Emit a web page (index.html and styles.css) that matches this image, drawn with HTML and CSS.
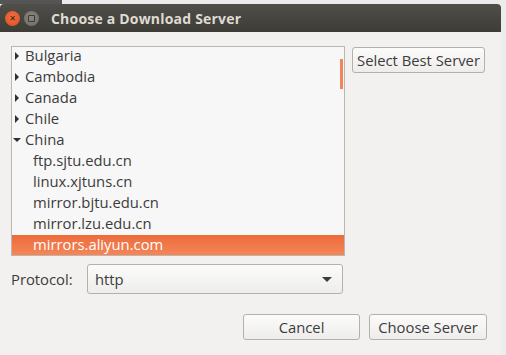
FILE: index.html
```html
<!DOCTYPE html>
<html lang="en">
<head>
  <meta charset="UTF-8">
  <title>Choose a Download Server</title>
  <link rel="stylesheet" href="styles.css">
</head>
<body>

<div class="backdrop"></div>

<div class="window">
  <div class="titlebar">
    <span class="btn-close">&#x2715;</span>
    <span class="btn-max"></span>
    <span class="title">Choose a Download Server</span>
  </div>

  <div class="content">
    <div class="top-row">
      <div class="tree">
        <div class="row"><span class="arrow right"></span>Bulgaria</div>
        <div class="row"><span class="arrow right"></span>Cambodia</div>
        <div class="row"><span class="arrow right"></span>Canada</div>
        <div class="row"><span class="arrow right"></span>Chile</div>
        <div class="row"><span class="arrow down"></span>China</div>
        <div class="row child">ftp.sjtu.edu.cn</div>
        <div class="row child">linux.xjtuns.cn</div>
        <div class="row child">mirror.bjtu.edu.cn</div>
        <div class="row child">mirror.lzu.edu.cn</div>
        <div class="row child selected">mirrors.aliyun.com</div>
        <span class="scroll"></span>
      </div>
      <button class="button best">Select Best Server</button>
    </div>

    <div class="protocol-row">
      <label>Protocol:</label>
      <div class="combo">
        <span>http</span>
        <span class="combo-arrow"></span>
      </div>
    </div>

    <div class="actions">
      <button class="button cancel">Cancel</button>
      <button class="button choose">Choose Server</button>
    </div>
  </div>
</div>

</body>
</html>
```

FILE: styles.css
```css
body {
  margin: 0;
  width: 506px;
  height: 355px;
  overflow: hidden;
  background-color: #ececec;
  font-family: "Open Sans", "DejaVu Sans", sans-serif;
  font-size: 14.8px;
  color: #3c3c3c;
  position: relative;
}
.backdrop {
  position: absolute;
  left: 0;
  top: 0;
  width: 62px;
  height: 4px;
  background-color: #555;
}
.window {
  position: relative;
  margin-top: 4px;
  width: 501px;
  height: 360px;
  background-color: #f2f1f0;
}
.titlebar {
  height: 28px;
  background: linear-gradient(#504e48, #3d3c37);
  border-radius: 4px 4px 0 0;
  display: flex;
  align-items: center;
  padding-left: 5px;
}
.btn-close {
  width: 15px;
  height: 15px;
  border-radius: 50%;
  background: radial-gradient(circle at 50% 40%, #f26f42, #d84f1f);
  color: #3a1c10;
  font-size: 8px;
  line-height: 15px;
  text-align: center;
  font-family: "DejaVu Sans", sans-serif;
  font-weight: bold;
}
.btn-max {
  width: 15px;
  height: 15px;
  border-radius: 50%;
  margin-left: 4px;
  background: radial-gradient(circle at 50% 40%, #8a8881, #6a6963);
  position: relative;
}
.btn-max::after {
  content: "";
  position: absolute;
  left: 4px;
  top: 4px;
  width: 5px;
  height: 5px;
  border: 1px solid #3c3b37;
  border-radius: 1px;
}
.title {
  margin-left: 12px;
  color: #dfdbd2;
  font-weight: bold;
  font-size: 14px;
  letter-spacing: 0.2px;
}
.content {
  padding: 14px 14px 0 11px;
}
.top-row {
  display: flex;
  align-items: flex-start;
  gap: 7px;
}
.tree {
  position: relative;
  width: 332px;
  height: 208px;
  border: 1px solid #bab6b0;
  background-color: #f7f7f7;
  overflow: hidden;
  padding-top: 0;
}
.tree .row:first-child {
  margin-top: -1px;
}
.row {
  box-sizing: border-box;
  height: 21px;
  line-height: 17px;
  padding-left: 3px;
  padding-bottom: 2px;
  white-space: nowrap;
  display: flex;
  align-items: center;
}
.row.child {
  padding-left: 21px;
}
.row.selected {
  background: linear-gradient(#ec6b3a, #f5875a);
  color: #ffffff;
}
.arrow {
  width: 0;
  height: 0;
  margin-right: 6px;
}
.arrow.right {
  border-top: 4px solid transparent;
  border-bottom: 4px solid transparent;
  border-left: 4px solid #2e2e2e;
}
.arrow.down {
  margin-left: -2px;
  margin-right: 4px;
  border-left: 4px solid transparent;
  border-right: 4px solid transparent;
  border-top: 4px solid #2e2e2e;
}
.scroll {
  position: absolute;
  right: 1px;
  top: 12px;
  width: 3px;
  height: 30px;
  background-color: #f0845a;
}
.button {
  font-family: inherit;
  font-size: 14.8px;
  color: #3c3c3c;
  background: linear-gradient(#fbfbfa, #eeedec);
  border: 1px solid #b4b0aa;
  border-radius: 3px;
  height: 26px;
  padding: 0;
}
.best {
  width: 133px;
  margin-top: 1px;
}
.protocol-row {
  display: flex;
  align-items: center;
  margin-top: 8px;
}
.protocol-row label {
  width: 76px;
}
.combo {
  border: 1px solid #b4b0aa;
  border-radius: 3px;
  background: linear-gradient(#fbfbfa, #eeedec);
  display: flex;
  align-items: center;
  justify-content: space-between;
  padding: 0 0 0 7px;
  box-sizing: border-box;
  width: 256px;
  height: 30px;
}
.combo-arrow {
  width: 0;
  height: 0;
  margin-right: 10px;
  border-left: 5px solid transparent;
  border-right: 5px solid transparent;
  border-top: 5px solid #3c3c3c;
}
.actions {
  display: flex;
  justify-content: flex-end;
  gap: 9px;
  margin-top: 20px;
}
.cancel {
  width: 117px;
}
.choose {
  width: 118px;
}
```
